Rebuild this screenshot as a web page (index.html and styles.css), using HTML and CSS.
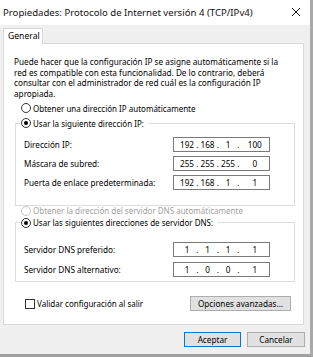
FILE: index.html
```html
<!DOCTYPE html>
<html lang="es">
<head>
<meta charset="utf-8">
<title>Propiedades: Protocolo de Internet versión 4 (TCP/IPv4)</title>
<link rel="stylesheet" href="styles.css">
</head>
<body>
<div class="window">
  <div class="titlebar">
    <span class="title">Propiedades: Protocolo de Internet versión 4 (TCP/IPv4)</span>
    <svg class="close" width="10" height="10" viewBox="0 0 10 10"><path d="M1 1 L9 9 M9 1 L1 9" stroke="#111" stroke-width="1" fill="none"/></svg>
  </div>
  <div class="body">
    <div class="tabs"><div class="tab">General</div></div>
    <div class="panel">
      <p class="desc">Puede hacer que la configuración IP se asigne automáticamente si la<br>red es compatible con esta funcionalidad. De lo contrario, deberá<br>consultar con el administrador de red cuál es la configuración IP<br>apropiada.</p>
      <div class="opt opt-ip-auto"><span class="radio"></span>Obtener una dirección IP automáticamente</div>
      <fieldset class="group group-ip">
        <legend><span class="radio on"></span>Usar la siguiente dirección IP:</legend>
        <div class="row"><span class="lbl">Dirección IP:</span><div class="ip"><span>192</span><i>.</i><span>168</span><i>.</i><span>1</span><i>.</i><span class="last">100</span></div></div>
        <div class="row"><span class="lbl">Máscara de subred:</span><div class="ip"><span>255</span><i>.</i><span>255</span><i>.</i><span>255</span><i>.</i><span class="last">0</span></div></div>
        <div class="row"><span class="lbl">Puerta de enlace predeterminada:</span><div class="ip"><span>192</span><i>.</i><span>168</span><i>.</i><span>1</span><i>.</i><span class="last">1</span></div></div>
      </fieldset>
      <div class="opt opt-dns-auto disabled"><span class="radio"></span>Obtener la dirección del servidor DNS automáticamente</div>
      <fieldset class="group group-dns">
        <legend><span class="radio on"></span>Usar las siguientes direcciones de servidor DNS:</legend>
        <div class="row"><span class="lbl">Servidor DNS preferido:</span><div class="ip"><span>1</span><i>.</i><span>1</span><i>.</i><span>1</span><i>.</i><span class="last">1</span></div></div>
        <div class="row row-gap"><span class="lbl">Servidor DNS alternativo:</span><div class="ip"><span>1</span><i>.</i><span>0</span><i>.</i><span>0</span><i>.</i><span class="last">1</span></div></div>
      </fieldset>
      <div class="bottom-row">
        <div class="check"><span class="box"></span>Validar configuración al salir</div>
        <button class="btn btn-adv">Opciones avanzadas...</button>
      </div>
    </div>
    <div class="actions">
      <button class="btn btn-main default">Aceptar</button>
      <button class="btn btn-main">Cancelar</button>
    </div>
  </div>
</div>
</body>
</html>
```

FILE: styles.css
```css
* { box-sizing: border-box; }
html, body { margin: 0; padding: 0; }
body {
  width: 313px;
  height: 357px;
  overflow: hidden;
  background: #ffffff;
  font-family: "Noto Sans", "Open Sans", sans-serif;
  color: #000;
}
.window {
  width: 313px;
  height: 357px;
  border-right: 3px solid #a9a9a9;
  border-bottom: 3px solid #a0a0a0;
  background: #f0f0f0;
  display: flex;
  flex-direction: column;
}
.titlebar {
  height: 25px;
  background: #fff;
  display: flex;
  align-items: center;
  justify-content: space-between;
  padding: 0 9px 1px 3px;
  flex: none;
}
.title {
  font-size: 9.6px;
  white-space: nowrap;
  color: #111;
}
.close { display: block; }
.body {
  flex: 1;
  padding: 3px 5px 0 3px;
  display: flex;
  flex-direction: column;
}
.tabs { display: flex; height: 16px; position: relative; z-index: 1; margin-bottom: -1px; }
.tab {
  width: 40px;
  height: 16px;
  background: #fff;
  border: 1px solid #d9d9d9;
  border-bottom: none;
  font-size: 8.6px;
  line-height: 14px;
  padding-left: 4px;
}
.panel {
  height: 282px;
  margin-right: 1px;
  background: #fff;
  border: 1px solid #d9d9d9;
  padding: 13px 12px 0 10px;
  display: flex;
  flex-direction: column;
}
.desc {
  margin: 0;
  font-size: 8.2px;
  line-height: 10.5px;
  white-space: nowrap;
}
.opt {
  display: flex;
  align-items: center;
  font-size: 8px;
  height: 11px;
  margin-left: 7px;
  white-space: nowrap;
}
.opt-ip-auto { margin-top: 3.5px; }
.opt-dns-auto { height: 10px; margin-top: 0; }
.disabled { color: #a0a0a0; }
.radio {
  width: 10px;
  height: 10px;
  border-radius: 50%;
  border: 1px solid #333;
  background: #fff;
  margin-right: 2px;
  flex: none;
  display: flex;
  align-items: center;
  justify-content: center;
}
.disabled .radio { border-color: #c4c4c4; }
.radio.on::after {
  content: "";
  width: 4px;
  height: 4px;
  border-radius: 50%;
  background: #000;
}
.group {
  margin: 0 0 0 1px;
  width: 280px;
  border: 1px solid #dcdcdc;
  padding: 8px 0 15px 8px;
  min-width: 0;
}
.group-ip { margin-top: 4px; }
.group-dns { margin-top: 1.5px; padding-top: 13.5px; padding-bottom: 4.5px; }
.group legend {
  display: flex;
  align-items: center;
  font-size: 8px;
  height: 11px;
  margin-left: -4px;
  padding: 0 5px 0 1px;
  white-space: nowrap;
}
.row {
  display: flex;
  align-items: center;
  height: 15px;
  font-size: 8.2px;
}
.row + .row { margin-top: 4px; }
.group-dns .row + .row { margin-top: 5px; }
.lbl { width: 149px; flex: none; white-space: nowrap; }
.ip {
  width: 97px;
  height: 15px;
  border: 1px solid #7a7a7a;
  display: flex;
  align-items: center;
  padding-left: 5px;
  font-size: 8.2px;
}
.ip span { width: 16px; text-align: center; }
.ip span.last { flex: 1; }
.ip i { font-style: normal; width: 4.5px; text-align: center; }
.bottom-row {
  margin-top: 14px;
  display: flex;
  align-items: center;
  justify-content: space-between;
}
.check {
  display: flex;
  align-items: center;
  font-size: 8px;
  margin-left: 11px;
  white-space: nowrap;
}
.box {
  width: 10px;
  height: 10px;
  border: 1px solid #333;
  background: #fff;
  margin-right: 2px;
}
.btn {
  font-family: inherit;
  font-size: 8.2px;
  background: #e1e1e1;
  border: 1px solid #adadad;
  color: #000;
  padding: 0;
  height: 15px;
  margin: 0;
}
.btn-adv { width: 101px; }
.actions {
  display: flex;
  justify-content: flex-end;
  gap: 6px;
  padding-top: 7px;
}
.btn-main { width: 58px; }
.btn.default { border-color: #0078d7; width: 57px; }
```
